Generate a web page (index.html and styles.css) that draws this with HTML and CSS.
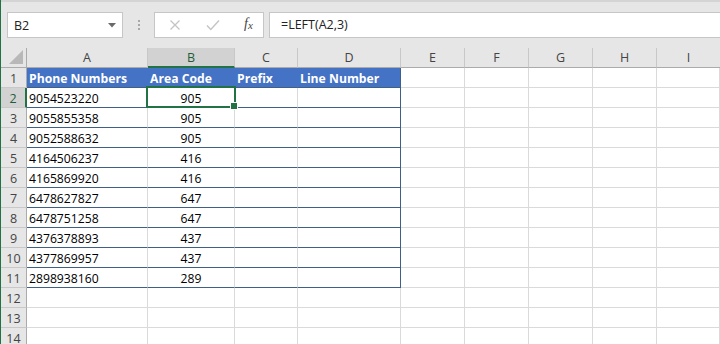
FILE: index.html
```html
<!DOCTYPE html>
<html>
<head>
<meta charset="utf-8">
<link rel="stylesheet" href="styles.css">
</head>
<body>
<div class="app">
  <div class="fbar">
    <div class="namebox">
      <span class="nb-text">B2</span>
      <svg class="nb-arrow" width="8" height="5" viewBox="0 0 8 5"><path d="M0 0H8L4 4.5Z" fill="#6a6a6a"/></svg>
    </div>
    <div class="grip"><i></i><i></i><i></i></div>
    <div class="fbtns">
      <svg class="ic" width="12" height="12" viewBox="0 0 12 12"><path d="M1.5 1.5L10.5 10.5M10.5 1.5L1.5 10.5" stroke="#c4c4c4" stroke-width="1.3" fill="none"/></svg>
      <svg class="ic" width="14" height="12" viewBox="0 0 14 12"><path d="M1 6.5L4.8 10.5L13 1.5" stroke="#c4c4c4" stroke-width="1.4" fill="none"/></svg>
      <span class="fx">f<span class="fx-x">x</span></span>
    </div>
    <div class="finput">=LEFT(A2,3)</div>
  </div>

  <div class="sheet">
    <div class="ch corner"><svg width="16" height="16" viewBox="0 0 16 16"><path d="M15 1V15H1Z" fill="#b8b8b8"/></svg></div>
    <div class="ch">A</div><div class="ch sel-col">B</div><div class="ch">C</div><div class="ch">D</div><div class="ch">E</div><div class="ch">F</div><div class="ch">G</div><div class="ch">H</div><div class="ch last">I</div>

    <div class="rh">1</div>
    <div class="c th">Phone Numbers</div><div class="c th">Area Code</div><div class="c th">Prefix</div><div class="c th tr">Line Number</div>
    <div class="c"></div><div class="c"></div><div class="c"></div><div class="c"></div><div class="c"></div>

    <div class="rh sel-row">2</div>
    <div class="c tb">9054523220</div><div class="c tb num active">905</div><div class="c tb"></div><div class="c tb tr"></div>
    <div class="c"></div><div class="c"></div><div class="c"></div><div class="c"></div><div class="c"></div>

    <div class="rh">3</div>
    <div class="c tb">9055855358</div><div class="c tb num">905</div><div class="c tb"></div><div class="c tb tr"></div>
    <div class="c"></div><div class="c"></div><div class="c"></div><div class="c"></div><div class="c"></div>

    <div class="rh">4</div>
    <div class="c tb">9052588632</div><div class="c tb num">905</div><div class="c tb"></div><div class="c tb tr"></div>
    <div class="c"></div><div class="c"></div><div class="c"></div><div class="c"></div><div class="c"></div>

    <div class="rh">5</div>
    <div class="c tb">4164506237</div><div class="c tb num">416</div><div class="c tb"></div><div class="c tb tr"></div>
    <div class="c"></div><div class="c"></div><div class="c"></div><div class="c"></div><div class="c"></div>

    <div class="rh">6</div>
    <div class="c tb">4165869920</div><div class="c tb num">416</div><div class="c tb"></div><div class="c tb tr"></div>
    <div class="c"></div><div class="c"></div><div class="c"></div><div class="c"></div><div class="c"></div>

    <div class="rh">7</div>
    <div class="c tb">6478627827</div><div class="c tb num">647</div><div class="c tb"></div><div class="c tb tr"></div>
    <div class="c"></div><div class="c"></div><div class="c"></div><div class="c"></div><div class="c"></div>

    <div class="rh">8</div>
    <div class="c tb">6478751258</div><div class="c tb num">647</div><div class="c tb"></div><div class="c tb tr"></div>
    <div class="c"></div><div class="c"></div><div class="c"></div><div class="c"></div><div class="c"></div>

    <div class="rh">9</div>
    <div class="c tb">4376378893</div><div class="c tb num">437</div><div class="c tb"></div><div class="c tb tr"></div>
    <div class="c"></div><div class="c"></div><div class="c"></div><div class="c"></div><div class="c"></div>

    <div class="rh">10</div>
    <div class="c tb">4377869957</div><div class="c tb num">437</div><div class="c tb"></div><div class="c tb tr"></div>
    <div class="c"></div><div class="c"></div><div class="c"></div><div class="c"></div><div class="c"></div>

    <div class="rh">11</div>
    <div class="c tb">2898938160</div><div class="c tb num">289</div><div class="c tb"></div><div class="c tb tr"></div>
    <div class="c"></div><div class="c"></div><div class="c"></div><div class="c"></div><div class="c"></div>

    <div class="rh">12</div>
    <div class="c"></div><div class="c"></div><div class="c"></div><div class="c"></div>
    <div class="c"></div><div class="c"></div><div class="c"></div><div class="c"></div><div class="c"></div>

    <div class="rh">13</div>
    <div class="c"></div><div class="c"></div><div class="c"></div><div class="c"></div>
    <div class="c"></div><div class="c"></div><div class="c"></div><div class="c"></div><div class="c"></div>

    <div class="rh">14</div>
    <div class="c"></div><div class="c"></div><div class="c"></div><div class="c"></div>
    <div class="c"></div><div class="c"></div><div class="c"></div><div class="c"></div><div class="c"></div>
  </div>
</div>
</body>
</html>
```

FILE: styles.css
```css
* { box-sizing: border-box; }
html, body { margin: 0; padding: 0; background: #ffffff; }
body {
  width: 720px;
  height: 344px;
  overflow: hidden;
  font-family: "Open Sans", "Liberation Sans", sans-serif;
  font-size: 12px;
  color: #000;
}
.app {
  border-left: 1px solid #217346;
  height: 344px;
  overflow: hidden;
}

/* formula bar */
.fbar {
  height: 48px;
  background: #e6e6e6;
  border-top: 2px solid #d4d4d4;
  padding-top: 10px;
  padding-left: 6px;
  display: flex;
  align-items: flex-start;
}
.namebox {
  width: 116px;
  height: 26px;
  background: #fff;
  border: 1px solid #c6c6c6;
  display: flex;
  align-items: center;
  justify-content: space-between;
  padding: 0 6px 0 6px;
}
.nb-text { color: #222; font-size: 12.5px; }
.nb-arrow { margin-top: 1px; }
.grip {
  width: 31px;
  height: 26px;
  display: flex;
  flex-direction: column;
  align-items: center;
  justify-content: center;
  gap: 2px;
}
.grip i {
  display: block;
  width: 2px;
  height: 2px;
  background: #a8a8a8;
}
.fbtns {
  width: 110px;
  height: 26px;
  background: #fff;
  border: 1px solid #c6c6c6;
  display: flex;
  align-items: center;
  padding-left: 14px;
  gap: 0;
}
.fbtns .ic:first-child { margin-right: 25px; }
.fbtns .ic:nth-child(2) { margin-right: 24px; }
.fx {
  font-family: "Liberation Serif", "DejaVu Serif", serif;
  font-style: italic;
  font-size: 14px;
  color: #444;
  line-height: 1;
  margin-top: -2px;
}
.fx-x { font-size: 11px; position: relative; top: 1px; }
.finput {
  flex: 1;
  margin-left: 5px;
  height: 26px;
  background: #fff;
  border: 1px solid #c6c6c6;
  border-right: none;
  padding-left: 11px;
  line-height: 24px;
  font-size: 12.5px;
  color: #222;
}

/* sheet grid */
.sheet {
  display: grid;
  grid-template-columns: 26px 121px 87px 63px 103px 64px 64px 64px 64px 1fr;
  grid-auto-rows: 20px;
}
.ch {
  background: #e6e6e6;
  border-right: 1px solid #c8c8c8;
  border-bottom: 1px solid #ababab;
  text-align: center;
  line-height: 19px;
  color: #444;
  font-size: 12.5px;
}
.ch.last { border-right: none; }
.ch.corner {
  border-right: 1px solid #ababab;
  display: flex;
  align-items: flex-end;
  justify-content: flex-end;
  padding: 0 2px 2px 0;
}
.ch.sel-col {
  background: #d2d2d2;
  border-bottom: 2px solid #217346;
  color: #1e5f3a;
}
.rh {
  background: #e6e6e6;
  border-right: 1px solid #ababab;
  border-bottom: 1px solid #c8c8c8;
  text-align: center;
  line-height: 19px;
  padding-top: 1px;
  color: #444;
  font-size: 12.5px;
}
.rh.sel-row {
  background: #d2d2d2;
  border-right: 2px solid #217346;
  color: #1e5f3a;
}
.c {
  border-right: 1px solid #dadada;
  border-bottom: 1px solid #dadada;
  line-height: 19px;
  padding-top: 1px;
  padding-left: 2px;
  white-space: nowrap;
  overflow: visible;
  position: relative;
  font-size: 12.2px;
}
.c.th {
  background: #4472c4;
  color: #fff;
  font-weight: 700;
  border-right-color: #4472c4;
  border-bottom-color: #3f5f85;
}
.c.tb { border-bottom-color: #3f5f85; }
.c.tr { border-right-color: #3f5f85; }
.c.num { text-align: center; padding-left: 0; }
.c.active::after {
  content: "";
  position: absolute;
  left: -2px;
  top: -2px;
  right: -2px;
  bottom: -1px;
  border: 2px solid #217346;
}
.c.active::before {
  content: "";
  position: absolute;
  right: -4px;
  bottom: -3px;
  width: 6px;
  height: 6px;
  background: #217346;
  border: 1px solid #fff;
  z-index: 2;
}
```
